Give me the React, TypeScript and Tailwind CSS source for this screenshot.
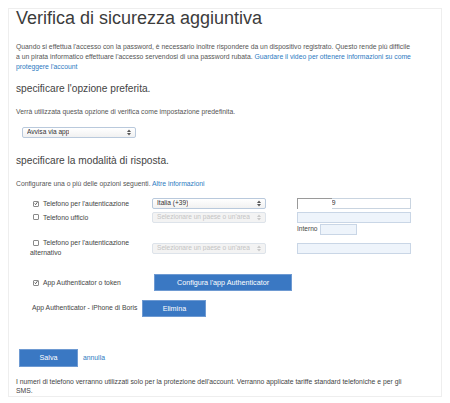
import React from "react";

const font = { fontFamily: '"Liberation Sans", Arial, sans-serif' };

function Arrows({ color = "#555" }: { color?: string }) {
  return (
    <svg width="4" height="7" viewBox="0 0 4 7" className="shrink-0">
      <path d="M0 3 L2 0.5 L4 3 Z" fill={color} />
      <path d="M0 4 L2 6.5 L4 4 Z" fill={color} />
    </svg>
  );
}

function Checkbox({ checked }: { checked?: boolean }) {
  return (
    <span className="inline-flex items-center justify-center w-[6px] h-[6px] border border-[#8a8a8a] rounded-[1px] bg-white align-[-0.5px] ml-[3px] mr-[4px]">
      {checked && (
        <svg width="5" height="5" viewBox="0 0 5 5">
          <path d="M0.8 2.6 L2 3.9 L4.3 0.8" stroke="#222" strokeWidth="0.9" fill="none" />
        </svg>
      )}
    </span>
  );
}

function Select({ text, disabled, className = "" }: { text: string; disabled?: boolean; className?: string }) {
  return (
    <div
      className={`flex items-center justify-between h-[11px] w-[114px] rounded-[2px] border px-[4px] ${
        disabled
          ? "border-[#dde3ea] bg-[#f3f3f3] text-[#c4c4c4]"
          : "border-[#b9c9dc] bg-gradient-to-b from-white to-[#f1f1f1] text-[#333]"
      } ${className}`}
    >
      <span className="text-[6.6px] leading-none whitespace-nowrap overflow-hidden">{text}</span>
      <Arrows color={disabled ? "#c8c8c8" : "#555"} />
    </div>
  );
}

function Btn({ children, className = "" }: { children: React.ReactNode; className?: string }) {
  return (
    <div
      className={`flex items-center justify-center h-[17px] bg-[#3a78c3] border border-[#6e9ad2] text-white text-[7.2px] leading-none ${className}`}
    >
      {children}
    </div>
  );
}

export default function App() {
  return (
    <div className="w-[450px] h-[403px] bg-white overflow-hidden pt-[8px] pl-[8px]" style={font}>
      <div className="w-[434px] h-[389px] border border-[#eeeeee] pl-[7px] text-[#4a4a4a]">
        <h1 className="text-[18px] leading-[18px] text-[#3c3c3c] font-light">Verifica di sicurezza aggiuntiva</h1>
        <p className="mt-[15px] w-[397px] text-[6.8px] leading-[10px] text-[#555]">
          Quando si effettua l'accesso con la password, è necessario inoltre rispondere da un dispositivo registrato. Questo rende più difficile a un pirata informatico effettuare l'accesso servendosi di una password rubata.{" "}
          <span className="text-[#2e7bbf]">Guardare il video per ottenere informazioni su come proteggere l'account</span>
        </p>

        <h2 className="mt-[10px] text-[10.2px] leading-[14px] text-[#444]">specificare l'opzione preferita.</h2>
        <p className="mt-[11px] text-[6.8px] leading-[10px] text-[#555]">
          Verrà utilizzata questa opzione di verifica come impostazione predefinita.
        </p>
        <Select text="Avvisa via app" className="mt-[10px] ml-[6px]" />

        <h2 className="mt-[16px] text-[10.2px] leading-[14px] text-[#444]">specificare la modalità di risposta.</h2>
        <p className="mt-[11px] text-[6.8px] leading-[10px] text-[#555]">
          Configurare una o più delle opzioni seguenti. <span className="text-[#2e7bbf]">Altre informazioni</span>
        </p>

        {/* Row 1 */}
        <div className="mt-[9px] flex items-center h-[11px]">
          <div className="w-[122px] ml-[14px] text-[6.8px] leading-[10px] text-[#444]">
            <Checkbox checked />
            Telefono per l'autenticazione
          </div>
          <Select text="Italia (+39)" />
          <div className="ml-[31px] relative w-[114px] h-[11px] border border-[#c9d4e0] bg-white flex items-center pl-[30px]">
            <span className="text-[6.8px] leading-none text-[#333]">79</span>
            <div className="absolute left-[-1px] top-[-1px] w-[35px] h-[11px] bg-white border-t border-l border-[#9a9a9a]" />
          </div>
        </div>

        {/* Row 2 */}
        <div className="mt-[3px] flex items-center h-[11px]">
          <div className="w-[122px] ml-[14px] text-[6.8px] leading-[10px] text-[#444]">
            <Checkbox />
            Telefono ufficio
          </div>
          <Select text="Selezionare un paese o un'area" disabled />
          <div className="ml-[31px] w-[114px] h-[11px] border border-[#c9d6e6] bg-[#eef4fb]" />
        </div>

        {/* Interno */}
        <div className="mt-[1px] flex items-center h-[11px] pl-[281px]">
          <span className="text-[6.6px] leading-none text-[#444] mr-[2px]">Interno</span>
          <div className="w-[37px] h-[11px] border border-[#c9d6e6] bg-[#eef4fb]" />
        </div>

        {/* Row 3 */}
        <div className="mt-[3px] flex items-center h-[20px]">
          <div className="w-[122px] ml-[14px] text-[6.8px] leading-[10px] text-[#444]">
            <Checkbox />
            Telefono per l'autenticazione alternativo
          </div>
          <Select text="Selezionare un paese o un'area" disabled />
          <div className="ml-[31px] w-[114px] h-[11px] border border-[#c9d6e6] bg-[#eef4fb]" />
        </div>

        {/* Row 4 */}
        <div className="mt-[16px] flex items-center h-[17px]">
          <div className="w-[124px] ml-[14px] text-[6.8px] leading-[10px] text-[#444]">
            <Checkbox checked />
            App Authenticator o token
          </div>
          <Btn className="w-[138px]">Configura l'app Authenticator</Btn>
        </div>

        {/* Row 5 */}
        <div className="mt-[9px] flex items-center h-[17px] pl-[16px]">
          <span className="text-[6.8px] leading-none text-[#444] mr-[5px] whitespace-nowrap">App Authenticator - iPhone di Boris</span>
          <Btn className="w-[64px]">Elimina</Btn>
        </div>

        {/* Salva */}
        <div className="mt-[32px] flex items-center h-[18px] pl-[3px]">
          <Btn className="w-[59px] h-[18px]">Salva</Btn>
          <span className="ml-[5px] text-[6.8px] leading-none text-[#2e7bbf]">annulla</span>
        </div>

        <p className="mt-[10px] w-[400px] text-[6.8px] leading-[9px] text-[#444]">
          I numeri di telefono verranno utilizzati solo per la protezione dell'account. Verranno applicate tariffe standard telefoniche e per gli SMS.
        </p>
      </div>
    </div>
  );
}
